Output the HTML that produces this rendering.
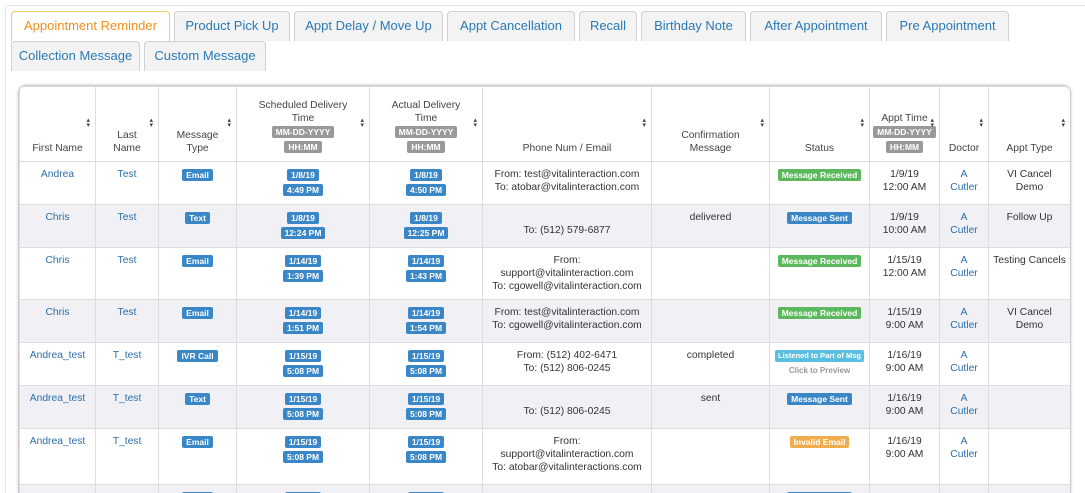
<!DOCTYPE html>
<html><head><style>
*{box-sizing:border-box;margin:0;padding:0}
html,body{width:1085px;height:493px;overflow:hidden}
body{background:#fff;font-family:"Liberation Sans",sans-serif;font-size:10.3px;color:#333;position:relative}
.panel{position:absolute;left:5px;top:5px;width:1080px;height:488px;border:1px solid #e3e3ea;border-bottom:none;border-right:none;border-radius:3px 0 0 0;background:#fff}
.tab{position:absolute;height:30px;border:1px solid #d0d0d0;border-bottom:none;border-radius:4px 4px 0 0;background:#f3f3f3;color:#2a7ab5;font-size:13px;text-align:center;line-height:27px;white-space:nowrap}
.tab.act{background:#fff;color:#f0901a;border-color:#f0d060}
.wrap{position:absolute;left:18px;top:85px;width:1053px;height:408px;border:1px solid #ccc;border-bottom:none;border-radius:8px 8px 0 0;overflow:hidden;box-shadow:0 0 3px #ccc}
table{border-collapse:collapse;table-layout:fixed;width:1051px}
td,th{border:1px solid #ddd;text-align:center;vertical-align:top;padding:6px 1px 0;line-height:13px;font-weight:normal;white-space:nowrap;overflow:hidden}
th{vertical-align:bottom;padding-bottom:6px;position:relative;color:#444}
th .s{position:absolute;right:5px;top:31px;font-size:7px;line-height:5px}
tr.g td{background:#f0f0f5}
a{color:#2a6ea8;text-decoration:none}
.b{display:inline-block;background:#3a87c8;color:#fff;font-size:8.5px;font-weight:bold;padding:0 4px;line-height:12px;border-radius:2px;margin:1px 0 2px}
.gr{background:#999}
.gn{background:#5cb85c}.lb{background:#5bc0de}.or{background:#f0ad4e}
</style></head><body>
<div class="panel"></div>
<div class="tab act" style="left:11px;top:11px;width:159px">Appointment Reminder</div>
<div class="tab" style="left:174px;top:11px;width:116px">Product Pick Up</div>
<div class="tab" style="left:294px;top:11px;width:149px">Appt Delay / Move Up</div>
<div class="tab" style="left:447px;top:11px;width:128px">Appt Cancellation</div>
<div class="tab" style="left:579px;top:11px;width:58px">Recall</div>
<div class="tab" style="left:641px;top:11px;width:105px">Birthday Note</div>
<div class="tab" style="left:750px;top:11px;width:132px">After Appointment</div>
<div class="tab" style="left:886px;top:11px;width:123px">Pre Appointment</div>
<div class="tab" style="left:11px;top:41px;width:129px">Collection Message</div>
<div class="tab" style="left:144px;top:41px;width:122px">Custom Message</div>
<div class="wrap"><table>
<colgroup><col style="width:76px"><col style="width:63px"><col style="width:78px"><col style="width:133px"><col style="width:113px"><col style="width:169px"><col style="width:118px"><col style="width:100px"><col style="width:70px"><col style="width:49px"><col style="width:82px"></colgroup>
<tr style="height:75px"><th>First Name<span class="s">▴<br>▾</span></th><th>Last<br>Name<span class="s">▴<br>▾</span></th><th>Message<br>Type<span class="s">▴<br>▾</span></th><th>Scheduled Delivery<br>Time<br><span class="b gr">MM-DD-YYYY</span><br><span class="b gr">HH:MM</span><span class="s">▴<br>▾</span></th><th>Actual Delivery<br>Time<br><span class="b gr">MM-DD-YYYY</span><br><span class="b gr">HH:MM</span><span class="s">▴<br>▾</span></th><th>Phone Num / Email<span class="s">▴<br>▾</span></th><th>Confirmation<br>Message<span class="s">▴<br>▾</span></th><th>Status<span class="s">▴<br>▾</span></th><th>Appt Time<br><span class="b gr">MM-DD-YYYY</span><br><span class="b gr">HH:MM</span><span class="s">▴<br>▾</span></th><th>Doctor<span class="s">▴<br>▾</span></th><th>Appt Type<span class="s">▴<br>▾</span></th></tr>
<tr style="height:43px"><td><a>Andrea</a></td><td><a>Test</a></td><td><span class="b">Email</span></td><td><span class="b">1/8/19</span><br><span class="b">4:49 PM</span></td><td><span class="b">1/8/19</span><br><span class="b">4:50 PM</span></td><td>From: test@vitalinteraction.com<br>To: atobar@vitalinteraction.com</td><td></td><td><span class="b gn">Message Received</span></td><td>1/9/19<br>12:00 AM</td><td><a>A<br>Cutler</a></td><td>VI Cancel<br>Demo</td></tr>
<tr class="g" style="height:43px"><td><a>Chris</a></td><td><a>Test</a></td><td><span class="b">Text</span></td><td><span class="b">1/8/19</span><br><span class="b">12:24 PM</span></td><td><span class="b">1/8/19</span><br><span class="b">12:25 PM</span></td><td><br>To: (512) 579-6877</td><td>delivered</td><td><span class="b">Message Sent</span></td><td>1/9/19<br>10:00 AM</td><td><a>A<br>Cutler</a></td><td>Follow Up</td></tr>
<tr style="height:52px"><td><a>Chris</a></td><td><a>Test</a></td><td><span class="b">Email</span></td><td><span class="b">1/14/19</span><br><span class="b">1:39 PM</span></td><td><span class="b">1/14/19</span><br><span class="b">1:43 PM</span></td><td>From:<br>support@vitalinteraction.com<br>To: cgowell@vitalinteraction.com</td><td></td><td><span class="b gn">Message Received</span></td><td>1/15/19<br>12:00 AM</td><td><a>A<br>Cutler</a></td><td>Testing Cancels</td></tr>
<tr class="g" style="height:43px"><td><a>Chris</a></td><td><a>Test</a></td><td><span class="b">Email</span></td><td><span class="b">1/14/19</span><br><span class="b">1:51 PM</span></td><td><span class="b">1/14/19</span><br><span class="b">1:54 PM</span></td><td>From: test@vitalinteraction.com<br>To: cgowell@vitalinteraction.com</td><td></td><td><span class="b gn">Message Received</span></td><td>1/15/19<br>9:00 AM</td><td><a>A<br>Cutler</a></td><td>VI Cancel<br>Demo</td></tr>
<tr style="height:43px"><td><a>Andrea_test</a></td><td><a>T_test</a></td><td><span class="b">IVR Call</span></td><td><span class="b">1/15/19</span><br><span class="b">5:08 PM</span></td><td><span class="b">1/15/19</span><br><span class="b">5:08 PM</span></td><td>From: (512) 402-6471<br>To: (512) 806-0245</td><td>completed</td><td><span class="b lb" style="font-size:7.5px;padding:0 3px">Listened to Part of Msg</span><br><span style="font-size:8px;color:#999;font-weight:bold">Click to Preview</span></td><td>1/16/19<br>9:00 AM</td><td><a>A<br>Cutler</a></td><td></td></tr>
<tr class="g" style="height:43px"><td><a>Andrea_test</a></td><td><a>T_test</a></td><td><span class="b">Text</span></td><td><span class="b">1/15/19</span><br><span class="b">5:08 PM</span></td><td><span class="b">1/15/19</span><br><span class="b">5:08 PM</span></td><td><br>To: (512) 806-0245</td><td>sent</td><td><span class="b">Message Sent</span></td><td>1/16/19<br>9:00 AM</td><td><a>A<br>Cutler</a></td><td></td></tr>
<tr style="height:56px"><td><a>Andrea_test</a></td><td><a>T_test</a></td><td><span class="b">Email</span></td><td><span class="b">1/15/19</span><br><span class="b">5:08 PM</span></td><td><span class="b">1/15/19</span><br><span class="b">5:08 PM</span></td><td>From:<br>support@vitalinteraction.com<br>To: atobar@vitalinteractions.com</td><td></td><td><span class="b or">Invalid Email</span></td><td>1/16/19<br>9:00 AM</td><td><a>A<br>Cutler</a></td><td></td></tr>
<tr class="g" style="height:43px"><td></td><td></td><td><span class="b">Email</span></td><td><span class="b">1/15/19</span></td><td><span class="b">1/15/19</span></td><td></td><td></td><td><span class="b">Message Sent</span></td><td></td><td></td><td></td></tr>
</table></div>
</body></html>
